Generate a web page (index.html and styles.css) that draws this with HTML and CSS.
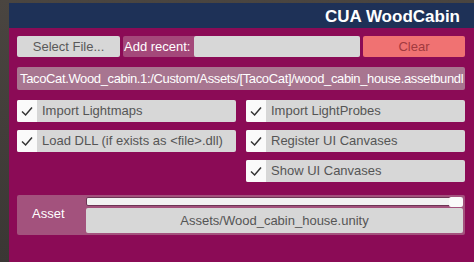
FILE: index.html
```html
<!DOCTYPE html>
<html>
<head>
<meta charset="utf-8">
<link rel="stylesheet" href="styles.css">
</head>
<body>
<div class="window">
  <div class="titlebar">CUA WoodCabin</div>
  <div class="content">
    <div class="row-top">
      <div class="btn btn-select">Select File...</div>
      <div class="recent">
        <span class="recent-label">Add recent:</span>
        <div class="recent-input"></div>
      </div>
      <div class="btn btn-clear">Clear</div>
    </div>
    <div class="path">TacoCat.Wood_cabin.1:/Custom/Assets/[TacoCat]/wood_cabin_house.assetbundl</div>
    <div class="checks">
      <div class="check"><span class="box"><svg viewBox="0 0 20 20" width="20" height="20"><path d="M5 10.5 L8.6 14 L15 6.5" fill="none" stroke="#333" stroke-width="1.5"/></svg></span><span class="lbl">Import Lightmaps</span></div>
      <div class="check"><span class="box"><svg viewBox="0 0 20 20" width="20" height="20"><path d="M5 10.5 L8.6 14 L15 6.5" fill="none" stroke="#333" stroke-width="1.5"/></svg></span><span class="lbl">Import LightProbes</span></div>
      <div class="check"><span class="box"><svg viewBox="0 0 20 20" width="20" height="20"><path d="M5 10.5 L8.6 14 L15 6.5" fill="none" stroke="#333" stroke-width="1.5"/></svg></span><span class="lbl">Load DLL (if exists as &lt;file&gt;.dll)</span></div>
      <div class="check"><span class="box"><svg viewBox="0 0 20 20" width="20" height="20"><path d="M5 10.5 L8.6 14 L15 6.5" fill="none" stroke="#333" stroke-width="1.5"/></svg></span><span class="lbl">Register UI Canvases</span></div>
      <div class="check check-right"><span class="box"><svg viewBox="0 0 20 20" width="20" height="20"><path d="M5 10.5 L8.6 14 L15 6.5" fill="none" stroke="#333" stroke-width="1.5"/></svg></span><span class="lbl">Show UI Canvases</span></div>
    </div>
    <div class="asset">
      <div class="asset-label">Asset</div>
      <div class="asset-main">
        <div class="slider"><div class="thumb"></div></div>
        <div class="asset-field">Assets/Wood_cabin_house.unity</div>
      </div>
    </div>
  </div>
</div>
</body>
</html>
```
FILE: styles.css
```css
html, body {
  margin: 0;
  padding: 0;
  height: 100%;
  overflow: hidden;
}
body {
  background: linear-gradient(180deg, #4a4540 0%, #3a3734 100%);
  font-family: "Liberation Sans", Arial, sans-serif;
  font-size: 13px;
}
.window {
  margin: 3px 0 0 9px;
  height: 259px;
  background: #8b0b56;
}
.titlebar {
  height: 25px;
  background: #1e3157;
  color: #fff;
  font-weight: bold;
  font-size: 17px;
  line-height: 27px;
  text-align: right;
  padding-right: 14px;
}
.content {
  padding: 8px 9px 0 8px;
}
.row-top {
  display: flex;
  gap: 3px;
  height: 21px;
}
.btn {
  background: #d7d7d7;
  color: #5a5a5a;
  text-align: center;
  line-height: 21px;
  border-radius: 2px;
}
.btn-select {
  width: 103px;
}
.recent {
  flex: 1;
  display: flex;
  align-items: center;
  background: #a4487a;
  border-radius: 2px;
}
.recent-label {
  color: #fff;
  padding: 0 3px 0 1px;
  white-space: nowrap;
}
.recent-input {
  flex: 1;
  align-self: stretch;
  background: #d7d7d7;
  border-radius: 2px;
}
.btn-clear {
  width: 102px;
  background: #f07272;
  color: #a23a3f;
}
.path {
  margin-top: 10px;
  height: 23px;
  line-height: 23px;
  background: #a87590;
  color: #fff;
  padding-left: 3px;
  letter-spacing: -0.36px;
  white-space: nowrap;
  overflow: hidden;
  border-radius: 2px;
}
.checks {
  margin-top: 10px;
  display: grid;
  grid-template-columns: 219px 219px;
  column-gap: 10px;
  row-gap: 8px;
  grid-auto-rows: 22px;
}
.check {
  display: flex;
  background: #d7d7d7;
  border-radius: 2px;
  overflow: hidden;
}
.check-right {
  grid-column: 2;
}
.box {
  width: 20px;
  background: #fafafa;
  display: flex;
  align-items: center;
  justify-content: center;
}
.lbl {
  color: #555;
  line-height: 22px;
  padding-left: 5px;
  white-space: nowrap;
}
.asset {
  margin-top: 13px;
  display: flex;
  height: 40px;
  background: #a3527d;
  border-radius: 2px;
}
.asset-label {
  width: 67px;
  color: #fff;
  line-height: 38px;
  padding-left: 15px;
  box-sizing: border-box;
}
.asset-main {
  flex: 1;
  padding: 2px;
  display: flex;
  flex-direction: column;
  gap: 2px;
}
.slider {
  position: relative;
  height: 8px;
  background: #f2f2f2;
  border: 1px solid #6d3555;
  border-radius: 2px;
}
.thumb {
  position: absolute;
  right: -1px;
  top: -1px;
  width: 14px;
  height: 10px;
  background: #fafafa;
  border-radius: 2px;
}
.asset-field {
  flex: 1;
  background: #d7d7d7;
  color: #555;
  text-align: center;
  line-height: 25px;
  border-radius: 2px;
}
```
